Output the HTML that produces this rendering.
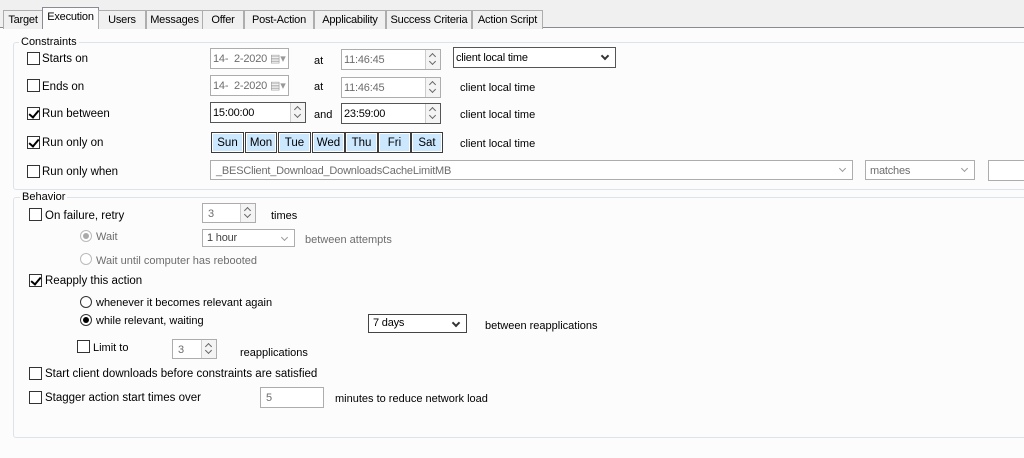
<!DOCTYPE html>
<html><head><meta charset="utf-8"><style>
*{box-sizing:border-box;margin:0;padding:0}
body{width:1024px;height:458px;overflow:hidden;background:#fcfcfd;font-family:"Liberation Sans",sans-serif;font-size:11px;color:#000;position:relative}
.a{position:absolute;white-space:nowrap;margin-top:2px}
.top{position:absolute;left:0;top:0;width:1024px;height:28px;background:#f0f0f0;border-bottom:1px solid #8a8a94}
.tab{position:absolute;top:10px;height:19px;border:1px solid #adadad;border-bottom:none;background:#f0f0f0;padding-top:3px;font-size:11px;text-align:center;white-space:nowrap;overflow:hidden;letter-spacing:-0.2px}
.tab.sel{top:7px;height:22px;background:#fcfcfd;border-color:#8a8a94;padding-top:3px}
.grp{position:absolute;border:1px solid #dde3ea;border-radius:3px}
.lbl{position:absolute;background:#fcfcfd;padding:0 2px;font-size:11px}
.cb{position:absolute;width:13px;height:13px;border:1px solid #333;background:#fff}
.cb.on::after{content:"";position:absolute;left:3px;top:0px;width:4px;height:8px;border:solid #000;border-width:0 2px 2px 0;transform:rotate(40deg)}
.rd{position:absolute;width:12px;height:12px;border:1px solid #333;border-radius:50%;background:#fff}
.rd.dis{border-color:#bbb}
.rd.on::after{content:"";position:absolute;left:2px;top:2px;width:6px;height:6px;border-radius:50%;background:#000}
.rd.dis.on::after{background:#aaa}
.box{position:absolute;border:1px solid #adadad;background:#fff;padding:4px 0 0 2px;color:#6d6d6d;font-size:11px;white-space:nowrap;overflow:hidden;letter-spacing:-0.2px}
.box.en{border-color:#7a7a7a;color:#000}
.spin{position:absolute;right:0;top:0;bottom:0;width:15px;border-left:1px solid #ccc;background:#f4f4f4}
.spin::before,.spin::after{content:"";position:absolute;left:4px;width:4px;height:4px;border:solid #666;border-width:1px 0 0 1px}
.spin::before{top:4px;transform:rotate(45deg)}
.spin::after{bottom:5px;transform:rotate(225deg)}
.dd::after{content:"";position:absolute;right:7px;top:5px;width:4px;height:4px;border:solid #999;border-width:0 1px 1px 0;transform:rotate(45deg)}
.dd.en::after{border-color:#333;border-width:0 2px 2px 0}
.day{position:absolute;top:132px;height:21px;border:1px solid #3c3c3c;background:#cce8ff;box-shadow:inset 0 0 0 1px #fff;text-align:center;padding-top:4px;font-size:11.5px}
.g{color:#6d6d6d}
</style></head><body>
<div class="top"></div>
<div class="tab" style="left:3px;width:40px">Target</div>
<div class="tab sel" style="left:42px;width:57px">Execution</div>
<div class="tab" style="left:98px;width:48px">Users</div>
<div class="tab" style="left:146px;width:57px">Messages</div>
<div class="tab" style="left:202px;width:42px">Offer</div>
<div class="tab" style="left:244px;width:70px">Post-Action</div>
<div class="tab" style="left:314px;width:72px">Applicability</div>
<div class="tab" style="left:386px;width:86px">Success Criteria</div>
<div class="tab" style="left:472px;width:71px">Action Script</div>

<div class="grp" style="left:13px;top:42px;width:1030px;height:148px"></div>
<div class="lbl" style="left:19px;top:36px">Constraints</div>
<div class="grp" style="left:13px;top:197px;width:1030px;height:241px"></div>
<div class="lbl" style="left:20px;top:191px">Behavior</div>

<div class="cb" style="left:27px;top:52px"></div><div class="a" style="left:42px;top:51px;font-size:11.5px">Starts on</div>
<div class="box" style="left:210px;top:48px;width:79px;height:21px">14-&nbsp; 2-2020<span style="position:absolute;left:59px;top:3px;color:#999;background:#fff">▤▾</span></div>
<div class="a" style="left:314px;top:53px">at</div>
<div class="box" style="left:341px;top:49px;width:100px;height:21px">11:46:45<div class="spin"></div></div>
<div class="box en dd" style="left:453px;top:47px;width:163px;height:21px;border-color:#555">client local time</div>

<div class="cb" style="left:27px;top:79px"></div><div class="a" style="left:42px;top:79px;font-size:11.5px">Ends on</div>
<div class="box" style="left:210px;top:75px;width:79px;height:21px">14-&nbsp; 2-2020<span style="position:absolute;left:59px;top:3px;color:#999;background:#fff">▤▾</span></div>
<div class="a" style="left:314px;top:79px">at</div>
<div class="box" style="left:341px;top:77px;width:100px;height:21px">11:46:45<div class="spin"></div></div>
<div class="a" style="left:460px;top:80px">client local time</div>

<div class="cb on" style="left:27px;top:107px"></div><div class="a" style="left:42px;top:106px;font-size:11.5px">Run between</div>
<div class="box en" style="left:210px;top:102px;width:96px;height:21px;border-color:#555">15:00:00<div class="spin"></div></div>
<div class="a" style="left:314px;top:107px">and</div>
<div class="box en" style="left:341px;top:103px;width:100px;height:21px;border-color:#555">23:59:00<div class="spin"></div></div>
<div class="a" style="left:460px;top:107px">client local time</div>

<div class="cb on" style="left:27px;top:136px"></div><div class="a" style="left:42px;top:135px;font-size:11.5px">Run only on</div>
<div class="day" style="left:211px;width:33px">Sun</div>
<div class="day" style="left:245px;width:32px">Mon</div>
<div class="day" style="left:278px;width:33px">Tue</div>
<div class="day" style="left:312px;width:33px">Wed</div>
<div class="day" style="left:345px;width:33px">Thu</div>
<div class="day" style="left:378px;width:33px">Fri</div>
<div class="day" style="left:411px;width:32px">Sat</div>
<div class="a" style="left:460px;top:136px">client local time</div>

<div class="cb" style="left:27px;top:165px"></div><div class="a" style="left:42px;top:164px;font-size:11.5px">Run only when</div>
<div class="box dd" style="left:210px;top:160px;width:643px;height:20px;padding-left:5px">_BESClient_Download_DownloadsCacheLimitMB</div>
<div class="box dd" style="left:865px;top:160px;width:110px;height:20px;padding-left:4px">matches</div>
<div class="box" style="left:988px;top:160px;width:50px;height:21px"></div>

<div class="cb" style="left:29px;top:208px"></div><div class="a" style="left:45px;top:208px;font-size:11.5px">On failure, retry</div>
<div class="box" style="left:202px;top:203px;width:54px;height:20px;padding-left:5px">3<div class="spin"></div></div>
<div class="a" style="left:271px;top:208px">times</div>
<div class="rd dis on" style="left:80px;top:230px"></div><div class="a g" style="left:96px;top:229px">Wait</div>
<div class="box dd" style="left:202px;top:229px;width:93px;height:18px;padding-left:4px;padding-top:2px;color:#444">1 hour</div>
<div class="a g" style="left:305px;top:232px">between attempts</div>
<div class="rd dis" style="left:80px;top:253px"></div><div class="a g" style="left:96px;top:253px">Wait until computer has rebooted</div>
<div class="cb on" style="left:29px;top:274px"></div><div class="a" style="left:45px;top:273px;font-size:11.5px">Reapply this action</div>
<div class="rd" style="left:80px;top:296px"></div><div class="a" style="left:96px;top:295px">whenever it becomes relevant again</div>
<div class="rd on" style="left:80px;top:314px"></div><div class="a" style="left:96px;top:313px">while relevant, waiting</div>
<div class="box en dd" style="left:368px;top:314px;width:99px;height:19px;padding-left:4px;padding-top:2px;border-color:#444">7 days</div>
<div class="a" style="left:485px;top:318px">between reapplications</div>
<div class="cb" style="left:77px;top:340px"></div><div class="a" style="left:93px;top:340px">Limit to</div>
<div class="box" style="left:172px;top:339px;width:45px;height:20px;padding-left:5px">3<div class="spin"></div></div>
<div class="a" style="left:240px;top:345px">reapplications</div>
<div class="cb" style="left:29px;top:367px"></div><div class="a" style="left:45px;top:366px;font-size:11.5px">Start client downloads before constraints are satisfied</div>
<div class="cb" style="left:29px;top:391px"></div><div class="a" style="left:45px;top:390px;font-size:11.5px">Stagger action start times over</div>
<div class="box" style="left:260px;top:387px;width:64px;height:21px;padding-left:5px">5</div>
<div class="a" style="left:335px;top:391px">minutes to reduce network load</div>
</body></html>
